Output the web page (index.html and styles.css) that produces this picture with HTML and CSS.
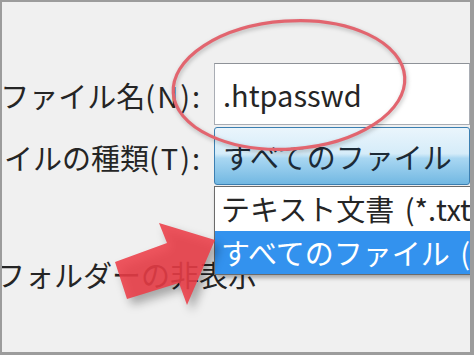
FILE: index.html
```html
<!DOCTYPE html>
<html lang="ja">
<head>
<meta charset="utf-8">
<link rel="stylesheet" href="styles.css">
</head>
<body>
<div class="frame">
  <div class="form">
    <div class="row r1">
      <div class="label"><span>ファイル名<span class="key">(N):</span></span></div>
      <div class="input">.htpasswd</div>
    </div>
    <div class="row r2">
      <div class="label"><span>ファイルの種類<span class="key">(T):</span></span></div>
      <div class="combo">すべてのファイル</div>
    </div>
    <div class="folders">フォルダーの非表示</div>
  </div>
  <ul class="dropdown">
    <li class="item">テキスト文書 (*.txt)</li>
    <li class="item selected">すべてのファイル (*.*)</li>
  </ul>
  <svg class="ellipse" width="474" height="355" viewBox="0 0 474 355">
    <ellipse cx="289" cy="85" rx="116" ry="64" transform="rotate(-4 289 85)" />
  </svg>
  <svg class="arrow" width="474" height="355" viewBox="0 0 474 355">
    <polygon points="115,262 167,243 159,223 215,240 187,305 179,283 127,299" />
  </svg>
</div>
</body>
</html>
```
FILE: styles.css
```css
html, body {
  margin: 0;
  padding: 0;
  background: #f0f0f0;
}

.frame {
  position: relative;
  width: 474px;
  height: 355px;
  box-sizing: border-box;
  border-top: 2px solid #9c9c9c;
  border-left: 2px solid #9c9c9c;
  border-right: 4px solid #9c9c9c;
  border-bottom: 3px solid #9c9c9c;
  background: #f0f0f0;
  overflow: hidden;
  font-family: "Noto Sans CJK JP", "Noto Sans", sans-serif;
  font-size: 29px;
  color: #252525;
}

.form {
  padding-top: 61px;
  display: flex;
  flex-direction: column;
  gap: 2px;
}

.row {
  display: grid;
  grid-template-columns: 212px 256px;
}

.r1 { height: 62px; }
.r2 { height: 58px; }

.label {
  display: flex;
  justify-content: flex-end;
  align-items: center;
  padding-right: 12px;
  padding-top: 2px;
  overflow: hidden;
  white-space: nowrap;
}

.key {
  letter-spacing: 2px;
}

.input {
  box-sizing: border-box;
  background: #fff;
  border: 1px solid #a9adb4;
  border-top-color: #8e9298;
  display: flex;
  align-items: center;
  padding-left: 8px;
  white-space: nowrap;
  overflow: hidden;
}

.combo {
  box-sizing: border-box;
  border: 1px solid #3c7fb1;
  border-radius: 3px;
  background: linear-gradient(#eaf5fc 0%, #d5ecf9 46%, #a9d7f2 54%, #72b8e2 100%);
  display: flex;
  align-items: center;
  padding-left: 8px;
  white-space: nowrap;
  overflow: hidden;
  color: #1c2a36;
}

.folders {
  margin-top: 67px;
  height: 40px;
  line-height: 40px;
  text-indent: -6px;
  white-space: nowrap;
}

.dropdown {
  position: absolute;
  left: 212px;
  top: 184px;
  width: 258px;
  margin: 0;
  padding: 0;
  list-style: none;
  box-sizing: border-box;
  border: 1px solid #6b6b6b;
  background: #fff;
  box-shadow: 2px 3px 4px rgba(0, 0, 0, 0.3);
}

.item {
  height: 44px;
  line-height: 42px;
  padding-left: 6px;
  white-space: nowrap;
  overflow: hidden;
  word-spacing: 4px;
}

.item.selected {
  background: #3392ee;
  color: #fff;
  height: 43px;
}

.ellipse {
  position: absolute;
  left: -2px;
  top: -2px;
  pointer-events: none;
  filter: drop-shadow(1px 2px 2px rgba(0, 0, 0, 0.25));
}

.ellipse ellipse {
  fill: none;
  stroke: #e2656f;
  stroke-width: 3.2;
}

.arrow {
  position: absolute;
  left: -2px;
  top: -2px;
  pointer-events: none;
  filter: drop-shadow(5px 6px 5px rgba(0, 0, 0, 0.35));
}

.arrow polygon {
  fill: rgba(236, 62, 72, 0.88);
}
```
